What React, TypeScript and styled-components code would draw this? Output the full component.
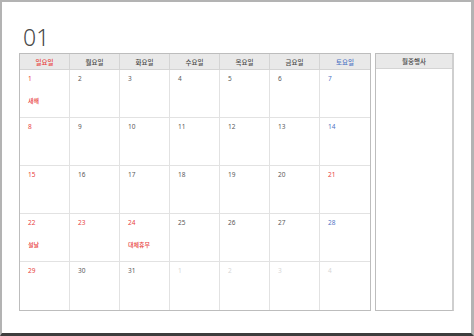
import styled, { createGlobalStyle } from "styled-components";

const Global = createGlobalStyle`
  html, body { margin: 0; padding: 0; background: #fff; }
  * { box-sizing: border-box; }
`;

const Page = styled.div`
  width: 474px;
  height: 336px;
  border-top: 2px solid #b3b3b3;
  border-left: 2px solid #b3b3b3;
  border-right: 3px solid #b3b3b3;
  border-bottom: 3px solid #3d3d3d;
  padding: 22px 0 0 17px;
  font-family: "Noto Sans", "Noto Sans CJK KR", sans-serif;
`;

const Title = styled.div`
  font-size: 23px;
  line-height: 26px;
  font-weight: 300;
  color: #4a4a4a;
  padding-left: 4px;
  height: 29px;
`;

const Body = styled.div`
  display: flex;
  gap: 4px;
`;

const Grid = styled.div`
  width: 352px;
  display: grid;
  grid-template-columns: repeat(7, 1fr);
  grid-template-rows: 16px repeat(5, 48px);
  border: 1px solid #bdbdbd;
`;

const Head = styled.div<{ $tone?: string }>`
  background: #e9e9e9;
  border-right: 1px solid #d4d4d4;
  border-bottom: 1px solid #d4d4d4;
  display: flex;
  align-items: center;
  justify-content: center;
  font-family: "Noto Sans CJK KR", sans-serif;
  font-size: 6.5px;
  font-weight: 500;
  color: ${p => p.$tone || "#4a4a4a"};
  &:nth-child(7n) { border-right: none; }
`;

const Cell = styled.div<{ $last?: boolean }>`
  border-right: 1px solid #e2e2e2;
  border-bottom: ${p => (p.$last ? "none" : "1px solid #e2e2e2")};
  padding: 5px 0 0 8px;
  display: flex;
  flex-direction: column;
  &:nth-child(7n) { border-right: none; }
`;

const Num = styled.div<{ $tone: string }>`
  font-size: 6.5px;
  line-height: 8px;
  color: ${p => p.$tone};
`;

const Note = styled.div`
  margin-top: 14px;
  font-family: "Noto Sans CJK KR", sans-serif;
  font-size: 6px;
  line-height: 8px;
  font-weight: 500;
  color: #e8413d;
`;

const Side = styled.div`
  width: 79px;
  border: 1px solid #bdbdbd;
  border-right: 2px solid #cfcfcf;
  display: flex;
  flex-direction: column;
`;

const SideHead = styled.div`
  height: 15px;
  background: #e9e9e9;
  border-bottom: 1px solid #d4d4d4;
  display: flex;
  align-items: center;
  justify-content: center;
  font-family: "Noto Sans CJK KR", sans-serif;
  font-size: 6.5px;
  font-weight: 500;
  color: #4a4a4a;
`;

const RED = "#e8413d";
const BLUE = "#4f74c4";
const GRAY = "#5a5a5a";
const FADE = "#d6d6d6";

const heads = ["일요일", "월요일", "화요일", "수요일", "목요일", "금요일", "토요일"];

type Day = { n: number; tone: string; note?: string };

const days: Day[] = [];
for (let i = 1; i <= 35; i++) {
  const col = (i - 1) % 7;
  const n = i > 31 ? i - 31 : i;
  let tone = col === 0 ? RED : col === 6 ? BLUE : GRAY;
  if (i > 31) tone = FADE;
  if ([21, 22, 23, 24].includes(i)) tone = RED;
  const note = i === 1 ? "새해" : i === 22 ? "설날" : i === 24 ? "대체휴무" : undefined;
  days.push({ n, tone, note });
}

export default function App() {
  return (
    <>
      <Global />
      <Page>
        <Title>01</Title>
        <Body>
          <Grid>
            {heads.map((h, i) => (
              <Head key={h} $tone={i === 0 ? RED : i === 6 ? BLUE : undefined}>{h}</Head>
            ))}
            {days.map((d, i) => (
              <Cell key={i} $last={i >= 28}>
                <Num $tone={d.tone}>{d.n}</Num>
                {d.note && <Note>{d.note}</Note>}
              </Cell>
            ))}
          </Grid>
          <Side>
            <SideHead>월중행사</SideHead>
          </Side>
        </Body>
      </Page>
    </>
  );
}
